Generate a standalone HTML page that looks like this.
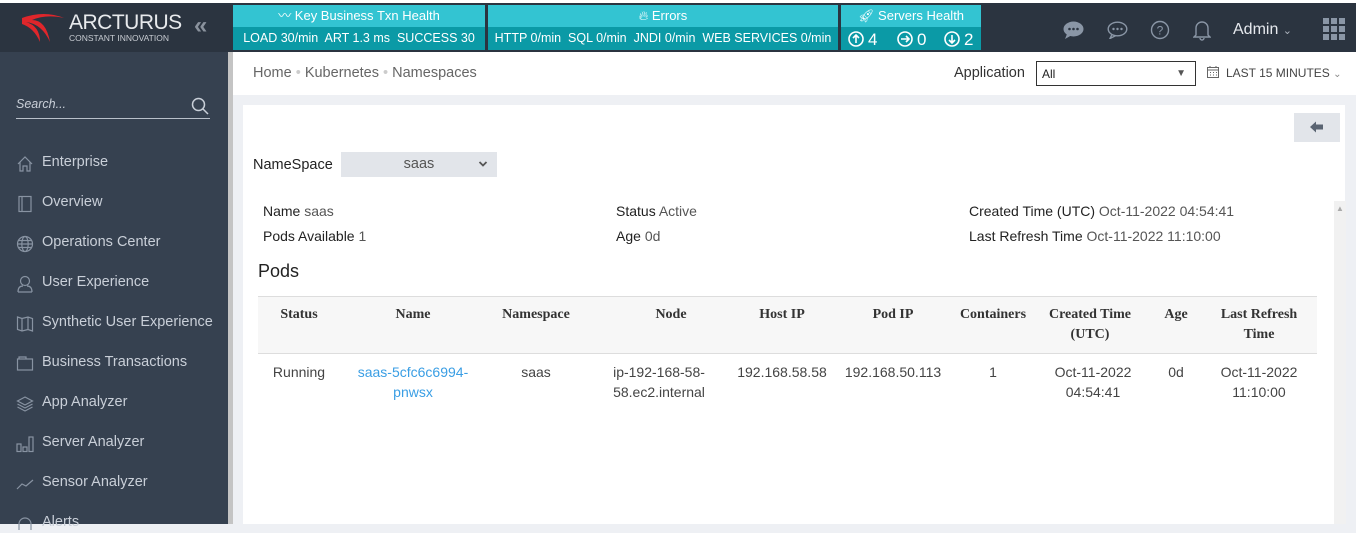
<!DOCTYPE html>
<html><head><meta charset="utf-8"><style>
*{margin:0;padding:0;box-sizing:border-box}
body{width:1356px;height:524px;overflow:hidden;background:#eef0f4;font-family:"Liberation Sans",sans-serif;position:relative;color:#333}
.a{position:absolute;white-space:nowrap}
.top{left:0;top:0;width:1356px;height:52px;background:#2b3440;border-top:3px solid #fff}
.side{left:0;top:52px;width:228px;height:472px;background:#364150}
.sb{left:228px;top:52px;width:5px;height:472px;background:#c4c4c4}
.pnl{top:5px;height:45px}
.ph{height:22px;background:#33c4d2;color:#fff;font-size:13px;text-align:center;line-height:22px}
.pb{height:23px;background:#0b9aa6;color:#fff;font-size:12.5px;text-align:center;line-height:23px}
.nav{left:16px;color:#c9cfd8;font-size:14.5px}
.nav svg{position:absolute;left:0;top:1px}
.nav span{position:absolute;left:26px}
.th{font-family:"Liberation Serif",serif;font-weight:bold;font-size:14px;color:#333;text-align:center;line-height:20px}
.td{font-size:14px;color:#444;text-align:center;line-height:20px}
.lbl{font-size:14px;color:#222}
.lbl i{font-style:normal;color:#555}
</style></head><body>
<div class="a top"></div>
<svg class="a" style="left:20px;top:12px" width="46" height="32" viewBox="0 0 46 32"><path d="M2 6 Q24 -2 44 6 Q26 2 12 8 Q26 8 30 30 Q22 12 6 10 Q20 14 20 30 Q14 16 2 12Z" fill="#e0262b"/></svg>
<div class="a" style="left:69px;top:11px;color:#e8eaed;font-size:21px;letter-spacing:-0.5px">ARCTURUS</div>
<div class="a" style="left:69px;top:33px;color:#c8ccd2;font-size:8.5px">CONSTANT INNOVATION</div>
<div class="a" style="left:194px;top:12px;color:#8a929d;font-size:24px;font-weight:bold">«</div>

<div class="a pnl" style="left:233px;width:252px"><div class="ph">〰 Key Business Txn Health</div><div class="pb">LOAD 30/min&nbsp; ART 1.3 ms&nbsp; SUCCESS 30</div></div>
<div class="a pnl" style="left:488px;width:350px"><div class="ph">🔥︎ Errors</div><div class="pb">HTTP 0/min&nbsp; SQL 0/min&nbsp; JNDI 0/min&nbsp; WEB SERVICES 0/min</div></div>
<div class="a pnl" style="left:841px;width:140px"><div class="ph">🚀︎ Servers Health</div><div class="pb"></div></div>
<svg class="a" style="left:848px;top:30px" width="130" height="18" viewBox="0 0 130 18" fill="none" stroke="#fff" stroke-width="1.6">
<circle cx="8" cy="9" r="7"/><path d="M8 13 V5 M5 8 L8 5 L11 8"/>
<circle cx="57" cy="9" r="7"/><path d="M53 9 H61 M58 6 L61 9 L58 12"/>
<circle cx="104" cy="9" r="7"/><path d="M104 5 V13 M101 10 L104 13 L107 10"/>
<text x="20" y="15" fill="#fff" stroke="none" font-size="17" font-family="Liberation Sans">4</text>
<text x="69" y="15" fill="#fff" stroke="none" font-size="17" font-family="Liberation Sans">0</text>
<text x="116" y="15" fill="#fff" stroke="none" font-size="17" font-family="Liberation Sans">2</text>
</svg>

<svg class="a" style="left:1063px;top:21px" width="21" height="18" viewBox="0 0 21 18"><ellipse cx="10.5" cy="8" rx="10" ry="7.5" fill="#8a96a6"/><path d="M4 13 L2 18 L9 14Z" fill="#8a96a6"/><circle cx="6.5" cy="8" r="1.3" fill="#2b3440"/><circle cx="10.5" cy="8" r="1.3" fill="#2b3440"/><circle cx="14.5" cy="8" r="1.3" fill="#2b3440"/></svg>
<svg class="a" style="left:1107px;top:21px" width="21" height="18" viewBox="0 0 21 18"><ellipse cx="10.5" cy="8" rx="9.3" ry="6.8" fill="none" stroke="#8a96a6" stroke-width="1.4"/><path d="M5 13.5 L3 17.5 L9 14.5" fill="none" stroke="#8a96a6" stroke-width="1.4"/><circle cx="6.5" cy="8" r="1.2" fill="#8a96a6"/><circle cx="10.5" cy="8" r="1.2" fill="#8a96a6"/><circle cx="14.5" cy="8" r="1.2" fill="#8a96a6"/></svg>
<svg class="a" style="left:1150px;top:20px" width="20" height="20" viewBox="0 0 20 20"><circle cx="10" cy="10" r="8.5" fill="none" stroke="#8a96a6" stroke-width="1.4"/><text x="10" y="14.5" font-size="12" text-anchor="middle" fill="#8a96a6" font-family="Liberation Sans">?</text></svg>
<svg class="a" style="left:1193px;top:19px" width="18" height="22" viewBox="0 0 18 22"><path d="M3 16 V9 a6 6 0 0 1 12 0 V16 L17 18 H1 Z M7 19 a2 2 0 0 0 4 0" fill="none" stroke="#8a96a6" stroke-width="1.4"/></svg>
<div class="a" style="left:1233px;top:21px;color:#e6e9ee;font-size:16px">Admin <span style="font-size:11px;color:#aeb5bf">⌄</span></div>
<svg class="a" style="left:1323px;top:18px" width="22" height="22" viewBox="0 0 22 22" fill="#8a96a6"><rect x="0" y="0" width="6" height="6"/><rect x="8" y="0" width="6" height="6"/><rect x="16" y="0" width="6" height="6"/><rect x="0" y="8" width="6" height="6"/><rect x="8" y="8" width="6" height="6"/><rect x="16" y="8" width="6" height="6"/><rect x="0" y="16" width="6" height="6"/><rect x="8" y="16" width="6" height="6"/><rect x="16" y="16" width="6" height="6"/></svg>

<div class="a side"></div>
<div class="a sb"></div>
<div class="a" style="left:16px;top:97px;color:#c9cfd8;font-size:12.5px;font-style:italic">Search...</div>
<svg class="a" style="left:191px;top:97px" width="18" height="18" viewBox="0 0 18 18"><circle cx="7.5" cy="7.5" r="6" fill="none" stroke="#c9cfd8" stroke-width="1.5"/><path d="M12 12 L17 17" stroke="#c9cfd8" stroke-width="1.5"/></svg>
<div class="a" style="left:16px;top:118px;width:194px;height:1px;background:#b9c0ca"></div>

<div class="a nav" style="top:154px"><svg width="18" height="18" viewBox="0 0 18 18" fill="none" stroke="#8893a2" stroke-width="1.2"><path d="M2 9 L9 2 L16 9 M4 7 V16 H7 V11 H11 V16 H14 V7"/></svg><span>Enterprise</span></div>
<div class="a nav" style="top:194px"><svg width="18" height="18" viewBox="0 0 18 18" fill="none" stroke="#8893a2" stroke-width="1.2"><rect x="3" y="1.5" width="12" height="15"/><path d="M6 1.5 V16.5"/></svg><span>Overview</span></div>
<div class="a nav" style="top:234px"><svg width="18" height="18" viewBox="0 0 18 18" fill="none" stroke="#8893a2" stroke-width="1.2"><circle cx="9" cy="9" r="7.5"/><ellipse cx="9" cy="9" rx="3.2" ry="7.5"/><path d="M1.5 9 H16.5 M2.5 5.5 H15.5 M2.5 12.5 H15.5"/></svg><span>Operations Center</span></div>
<div class="a nav" style="top:274px"><svg width="18" height="18" viewBox="0 0 18 18" fill="none" stroke="#8893a2" stroke-width="1.2"><circle cx="9" cy="6" r="4.5"/><path d="M2 17 Q2 11 7 11 M16 17 Q16 11 11 11 M2 17 H16"/></svg><span>User Experience</span></div>
<div class="a nav" style="top:314px"><svg width="18" height="18" viewBox="0 0 18 18" fill="none" stroke="#8893a2" stroke-width="1.2"><path d="M1.5 2 L6 3.5 L12 2 L16.5 3.5 V16 L12 14.5 L6 16 L1.5 14.5Z M6 3.5 V16 M12 2 V14.5"/></svg><span>Synthetic User Experience</span></div>
<div class="a nav" style="top:354px"><svg width="18" height="18" viewBox="0 0 18 18" fill="none" stroke="#8893a2" stroke-width="1.2"><rect x="1.5" y="4" width="15" height="11"/><path d="M3 4 V2 H10 V4"/></svg><span>Business Transactions</span></div>
<div class="a nav" style="top:394px"><svg width="18" height="18" viewBox="0 0 18 18" fill="none" stroke="#8893a2" stroke-width="1.2"><path d="M9 2 L16.5 6 L9 10 L1.5 6Z M1.5 9 L9 13 L16.5 9 M1.5 12 L9 16 L16.5 12"/></svg><span>App Analyzer</span></div>
<div class="a nav" style="top:434px"><svg width="18" height="18" viewBox="0 0 18 18" fill="none" stroke="#8893a2" stroke-width="1.2"><rect x="1" y="9" width="4" height="7.5"/><rect x="7" y="12" width="4" height="4.5"/><rect x="13" y="2" width="4" height="14.5"/></svg><span>Server Analyzer</span></div>
<div class="a nav" style="top:474px"><svg width="18" height="18" viewBox="0 0 18 18" fill="none" stroke="#8893a2" stroke-width="1.2"><path d="M1 14 L6 9 L10 11 L17 5"/></svg><span>Sensor Analyzer</span></div>
<div class="a nav" style="top:514px"><svg width="18" height="18" viewBox="0 0 18 18" fill="none" stroke="#8893a2" stroke-width="1.2"><path d="M3 15 V9 a6 6 0 0 1 12 0 V15"/></svg><span>Alerts</span></div>

<div class="a" style="left:233px;top:52px;width:1123px;height:43px;background:#fff"></div>
<div class="a" style="left:253px;top:65px;font-size:14.5px;color:#666">Home <span style="color:#ccc">•</span> Kubernetes <span style="color:#ccc">•</span> Namespaces</div>
<div class="a" style="left:954px;top:65px;font-size:14.5px;color:#333">Application</div>
<div class="a" style="left:1036px;top:61px;width:160px;height:25px;border:1px solid #333;background:#fff;font-size:12px;padding:5px 5px;color:#222">All<span style="position:absolute;right:9px;top:6px;font-size:10px;color:#555">▼</span></div>
<svg class="a" style="left:1207px;top:66px" width="12" height="12" viewBox="0 0 12 12" fill="none" stroke="#666" stroke-width="1"><rect x="0.5" y="1.5" width="11" height="10"/><path d="M0.5 4 H11.5 M3 0 V2 M9 0 V2 M3 6.5H4 M6 6.5H7 M9 6.5H10 M3 9H4 M6 9H7 M9 9H10"/></svg>
<div class="a" style="left:1226px;top:66px;font-size:12px;color:#444">LAST 15 MINUTES <span style="color:#888;font-size:10px">⌄</span></div>

<div class="a" style="left:243px;top:105px;width:1102px;height:419px;background:#fff"></div>
<div class="a" style="left:1334px;top:201px;width:12px;height:323px;background:#f1f1f1"></div>
<div class="a" style="left:1336px;top:204px;font-size:8px;color:#aaa">▲</div>
<div class="a" style="left:1294px;top:113px;width:46px;height:29px;background:#e2e5ea"></div>
<svg class="a" style="left:1310px;top:121px" width="14" height="12" viewBox="0 0 14 12"><path d="M0 6 L6 0.5 V3.5 H13 V8.5 H6 V11.5Z" fill="#5a6472"/></svg>

<div class="a" style="left:253px;top:157px;font-size:14.5px;color:#222">NameSpace</div>
<div class="a" style="left:341px;top:152px;width:156px;height:25px;background:#e2e5ea;font-size:14.5px;color:#555;text-align:center;line-height:25px">saas</div>
<svg class="a" style="left:478px;top:160px" width="10" height="8" viewBox="0 0 10 8"><path d="M1.5 2 L5 5.5 L8.5 2" fill="none" stroke="#555" stroke-width="1.8"/></svg>

<div class="a lbl" style="left:263px;top:203px">Name <i>saas</i></div>
<div class="a lbl" style="left:263px;top:228px">Pods Available <i>1</i></div>
<div class="a lbl" style="left:616px;top:203px">Status <i>Active</i></div>
<div class="a lbl" style="left:616px;top:228px">Age <i>0d</i></div>
<div class="a lbl" style="left:969px;top:203px">Created Time (UTC) <i>Oct-11-2022 04:54:41</i></div>
<div class="a lbl" style="left:969px;top:228px">Last Refresh Time <i>Oct-11-2022 11:10:00</i></div>
<div class="a" style="left:258px;top:261px;font-size:18px;color:#222">Pods</div>

<div class="a" style="left:258px;top:296px;width:1059px;height:58px;background:#f7f7f7;border-top:1px solid #ddd;border-bottom:1px solid #ddd"></div>
<div class="a th" style="left:249px;top:305px;width:100px">Status</div>
<div class="a th" style="left:363px;top:305px;width:100px">Name</div>
<div class="a th" style="left:486px;top:305px;width:100px">Namespace</div>
<div class="a th" style="left:621px;top:305px;width:100px">Node</div>
<div class="a th" style="left:732px;top:305px;width:100px">Host IP</div>
<div class="a th" style="left:843px;top:305px;width:100px">Pod IP</div>
<div class="a th" style="left:943px;top:305px;width:100px">Containers</div>
<div class="a th" style="left:1040px;top:305px;width:100px;white-space:normal">Created Time<br>(UTC)</div>
<div class="a th" style="left:1126px;top:305px;width:100px">Age</div>
<div class="a th" style="left:1209px;top:305px;width:100px">Last Refresh<br>Time</div>

<div class="a td" style="left:249px;top:362px;width:100px">Running</div>
<div class="a td" style="left:343px;top:362px;width:140px;color:#3a9ee4">saas-5cfc6c6994-<br>pnwsx</div>
<div class="a td" style="left:486px;top:362px;width:100px">saas</div>
<div class="a td" style="left:589px;top:362px;width:140px">ip-192-168-58-<br>58.ec2.internal</div>
<div class="a td" style="left:727px;top:362px;width:110px">192.168.58.58</div>
<div class="a td" style="left:838px;top:362px;width:110px">192.168.50.113</div>
<div class="a td" style="left:943px;top:362px;width:100px">1</div>
<div class="a td" style="left:1043px;top:362px;width:100px">Oct-11-2022<br>04:54:41</div>
<div class="a td" style="left:1126px;top:362px;width:100px">0d</div>
<div class="a td" style="left:1209px;top:362px;width:100px">Oct-11-2022<br>11:10:00</div>
</body></html>
